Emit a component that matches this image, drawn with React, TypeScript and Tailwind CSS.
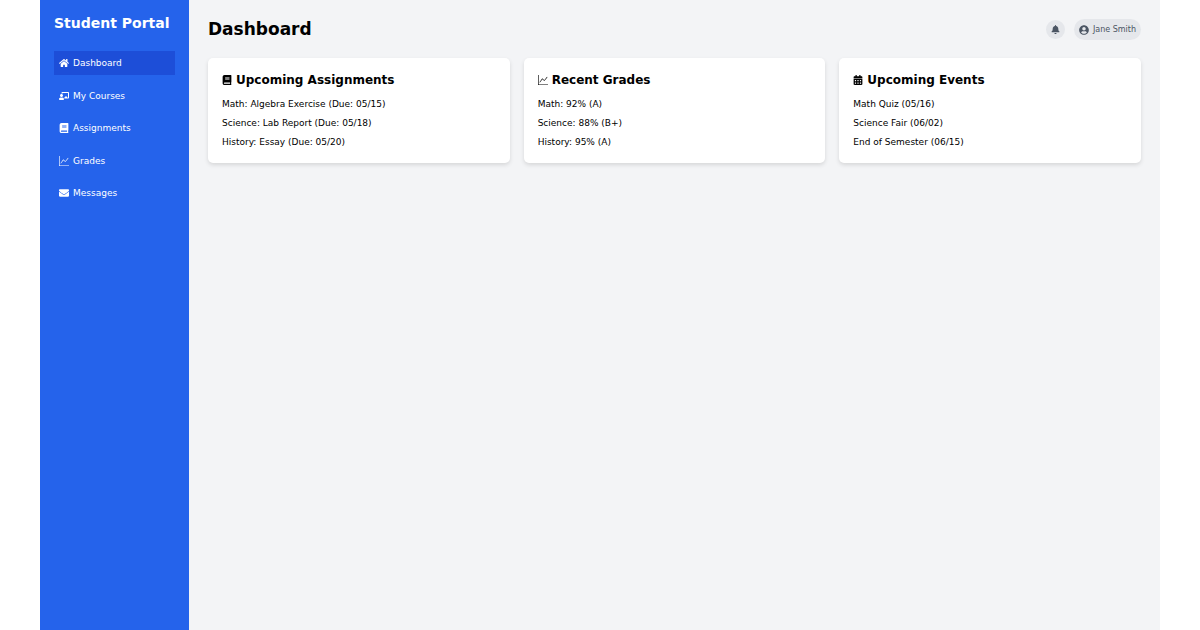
import type { IconType } from "react-icons";
import {
  FaBell,
  FaBook,
  FaCalendarAlt,
  FaChalkboardTeacher,
  FaEnvelope,
  FaHome,
  FaUserCircle,
} from "react-icons/fa";
import { BsGraphUp } from "react-icons/bs";
import { clsx } from "clsx";

type NavItem = { label: string; icon: IconType };

const NAV: NavItem[] = [
  { label: "Dashboard", icon: FaHome },
  { label: "My Courses", icon: FaChalkboardTeacher },
  { label: "Assignments", icon: FaBook },
  { label: "Grades", icon: BsGraphUp },
  { label: "Messages", icon: FaEnvelope },
];

const CARDS: { title: string; icon: IconType; items: string[] }[] = [
  {
    title: "Upcoming Assignments",
    icon: FaBook,
    items: [
      "Math: Algebra Exercise (Due: 05/15)",
      "Science: Lab Report (Due: 05/18)",
      "History: Essay (Due: 05/20)",
    ],
  },
  {
    title: "Recent Grades",
    icon: BsGraphUp,
    items: ["Math: 92% (A)", "Science: 88% (B+)", "History: 95% (A)"],
  },
  {
    title: "Upcoming Events",
    icon: FaCalendarAlt,
    items: ["Math Quiz (05/16)", "Science Fair (06/02)", "End of Semester (06/15)"],
  },
];

function Sidebar({ active }: { active: string }) {
  return (
    <aside className="w-[149px] shrink-0 bg-[#2563eb] p-[14px] text-white">
      <div className="mb-[18px] text-[14px] leading-[19px] font-bold whitespace-nowrap">Student Portal</div>
      <nav className="flex h-[154px] flex-col justify-between">
        {NAV.map(({ label, icon: Icon }) => (
          <a
            key={label}
            href="#"
            aria-current={label === active ? "page" : undefined}
            className={clsx(
              "flex items-center gap-[4px] px-[5px] py-[5px] leading-[14px]",
              label === active && "bg-[#1d4ed8]"
            )}
          >
            <Icon className="size-[10px]" />
            {label}
          </a>
        ))}
      </nav>
    </aside>
  );
}

function Header() {
  return (
    <header className="mb-[18px] flex items-center justify-between">
      <h1 className="text-[17px] leading-[21px] font-bold">Dashboard</h1>
      <div className="flex items-center gap-[9px] text-[#4b5563]">
        <button type="button" aria-label="Notifications" className="rounded-full bg-[#e5e7eb] p-[5px]">
          <FaBell className="size-[9px]" />
        </button>
        <button
          type="button"
          className="flex items-center gap-[4px] rounded-full bg-[#e5e7eb] p-[5px] text-[8px] leading-[11px]"
        >
          <FaUserCircle className="size-[10px]" />
          Jane Smith
        </button>
      </div>
    </header>
  );
}

function Card({ title, icon: Icon, items }: (typeof CARDS)[number]) {
  return (
    <section className="rounded-[5px] bg-white p-[14px] shadow-[0_2px_4px_rgba(0,0,0,0.12)]">
      <h2 className="mb-[9px] flex items-center gap-[4px] text-[12px] leading-[16px] font-bold">
        <Icon className="size-[10px]" />
        {title}
      </h2>
      <ul className="flex flex-col gap-[5px] leading-[14px]">
        {items.map((item) => (
          <li key={item}>{item}</li>
        ))}
      </ul>
    </section>
  );
}

export default function App() {
  return (
    <div className="min-h-screen bg-white px-10 font-['DejaVu_Sans',sans-serif] text-[9px] text-black">
      <div className="flex min-h-screen bg-[#f3f4f6]">
        <Sidebar active="Dashboard" />
        <main className="min-w-0 flex-1 p-[19px]">
          <Header />
          <div className="grid grid-cols-3 gap-[14px]">
            {CARDS.map((card) => (
              <Card key={card.title} {...card} />
            ))}
          </div>
        </main>
      </div>
    </div>
  );
}
